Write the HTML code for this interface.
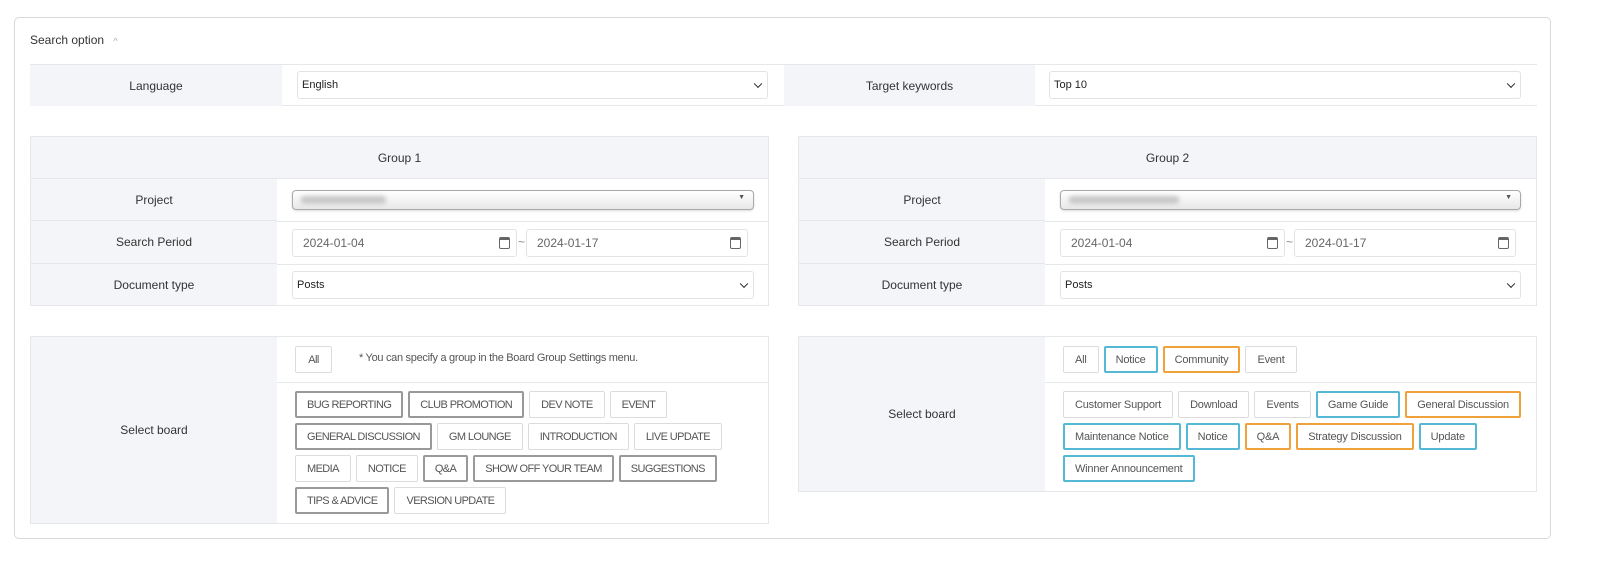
<!DOCTYPE html>
<html><head><meta charset="utf-8"><style>
*{box-sizing:border-box;margin:0;padding:0}
body{width:1600px;height:565px;background:#fff;font-family:"Liberation Sans","Noto Sans CJK KR",sans-serif;color:#333;font-size:12px;position:relative;overflow:hidden}
.outer{position:absolute;left:14px;top:17px;width:1537px;height:522px;border:1px solid #d8d8d8;border-radius:5px}
.abs{position:absolute}
.lbl{background:#f4f5f8;display:flex;align-items:center;justify-content:center;font-size:12px;color:#333}
.tbl{position:absolute;border:1px solid #e6e7eb;background:#fff}
.sel{position:absolute;border:1px solid #e3e3e3;border-radius:3px;background:#fff;display:flex;align-items:center;padding-left:4px;font-size:11px;color:#222}
.sel .ch{position:absolute;right:6px;top:50%;width:6px;height:6px;border-right:1.5px solid #222;border-bottom:1.5px solid #222;transform:translateY(-70%) rotate(45deg)}
.proj{position:absolute;border:1px solid #aaa;border-radius:4px;background:linear-gradient(#fff,#e8e8e8);box-shadow:0 1px 2px rgba(0,0,0,.15)}
.proj .blur{position:absolute;left:8px;top:5px;width:85px;height:8px;background:#c8c8c8;border-radius:3px;filter:blur(2px)}
.proj .ar{position:absolute;right:8px;top:3px;font-size:7px;color:#555}
.date{position:absolute;border:1px solid #e3e3e3;border-radius:3px;background:#fff;display:flex;align-items:center;padding-left:10px;font-size:12px;color:#666}
.cal{position:absolute;right:6px;top:7px;width:11px;height:12px;border:1.5px solid #666;border-radius:2px;border-top-width:3px}
.tags{position:absolute;display:flex;flex-wrap:wrap;gap:5px 5px}
.t{height:27px;border:1px solid #dcdcdc;border-radius:2px;padding:0 11px;display:flex;align-items:center;font-size:11px;color:#555;background:#fff;letter-spacing:-.6px}
.r .t{letter-spacing:-.2px}
.d{border:2px solid #999;padding:0 10px}
.b{border:2px solid #55b9d6;padding:0 10px}
.o{border:2px solid #efa13a;padding:0 10px}
</style></head><body>
<div class="outer"></div>
<div class="abs" style="left:30px;top:33px;font-size:12px;color:#333">Search option <span style="color:#aaa;font-size:9px;margin-left:6px">^</span></div>

<div class="tbl" style="left:30px;top:64px;width:1507px;height:42px;border-left:none;border-right:none">
 <div class="lbl abs" style="left:0;top:0;width:252px;height:41px">Language</div>
 <div class="sel" style="left:267px;top:6px;width:471px;height:28px">English<span class="ch"></span></div>
 <div class="lbl abs" style="left:754px;top:0;width:251px;height:41px">Target keywords</div>
 <div class="sel" style="left:1019px;top:6px;width:472px;height:28px">Top 10<span class="ch"></span></div>
</div>

<div class="tbl" style="left:30px;top:136px;width:739px;height:170px">
 <div class="lbl abs" style="left:0;top:0;width:737px;height:42px;border-bottom:1px solid #e6e7eb">Group 1</div>
 <div class="lbl abs" style="left:0;top:42px;width:246px;height:42px;border-bottom:1px solid #e6e7eb">Project</div>
 <div class="lbl abs" style="left:0;top:84px;width:246px;height:43px;border-bottom:1px solid #e6e7eb">Search Period</div>
 <div class="lbl abs" style="left:0;top:127px;width:246px;height:41px">Document type</div>
 <div class="abs" style="left:246px;top:84px;width:491px;height:1px;background:#e6e7eb"></div>
 <div class="abs" style="left:246px;top:127px;width:491px;height:1px;background:#e6e7eb"></div>
 <div class="proj" style="left:261px;top:53px;width:462px;height:20px"><div class="blur"></div><span class="ar">▼</span></div>
 <div class="date" style="left:261px;top:92px;width:225px;height:28px">2024-01-04<span class="cal"></span></div>
 <div class="abs" style="left:487px;top:98px;color:#888">~</div>
 <div class="date" style="left:495px;top:92px;width:222px;height:28px">2024-01-17<span class="cal"></span></div>
 <div class="sel" style="left:261px;top:134px;width:462px;height:28px">Posts<span class="ch"></span></div>
</div>
<div class="tbl" style="left:798px;top:136px;width:739px;height:170px">
 <div class="lbl abs" style="left:0;top:0;width:737px;height:42px;border-bottom:1px solid #e6e7eb">Group 2</div>
 <div class="lbl abs" style="left:0;top:42px;width:246px;height:42px;border-bottom:1px solid #e6e7eb">Project</div>
 <div class="lbl abs" style="left:0;top:84px;width:246px;height:43px;border-bottom:1px solid #e6e7eb">Search Period</div>
 <div class="lbl abs" style="left:0;top:127px;width:246px;height:41px">Document type</div>
 <div class="abs" style="left:246px;top:84px;width:491px;height:1px;background:#e6e7eb"></div>
 <div class="abs" style="left:246px;top:127px;width:491px;height:1px;background:#e6e7eb"></div>
 <div class="proj" style="left:261px;top:53px;width:461px;height:20px"><div class="blur" style="width:110px"></div><span class="ar">▼</span></div>
 <div class="date" style="left:261px;top:92px;width:225px;height:28px">2024-01-04<span class="cal"></span></div>
 <div class="abs" style="left:487px;top:98px;color:#888">~</div>
 <div class="date" style="left:495px;top:92px;width:222px;height:28px">2024-01-17<span class="cal"></span></div>
 <div class="sel" style="left:261px;top:134px;width:461px;height:28px">Posts<span class="ch"></span></div>
</div>

<div class="tbl" style="left:30px;top:336px;width:739px;height:188px">
 <div class="lbl abs" style="left:0;top:0;width:246px;height:186px">Select board</div>
 <div class="abs" style="left:246px;top:45px;width:491px;height:1px;background:#e6e7eb"></div>
 <div class="t abs" style="left:264px;top:9px;width:37px;justify-content:center;padding:0">All</div>
 <div class="abs" style="left:328px;top:15px;font-size:11px;color:#555;letter-spacing:-.3px">* You can specify a group in the Board Group Settings menu.</div>
 <div class="tags" style="left:264px;top:54px;width:465px">
  <span class="t d">BUG REPORTING</span><span class="t d">CLUB PROMOTION</span><span class="t">DEV NOTE</span><span class="t">EVENT</span>
  <span class="t d">GENERAL DISCUSSION</span><span class="t">GM LOUNGE</span><span class="t">INTRODUCTION</span><span class="t">LIVE UPDATE</span>
  <span class="t">MEDIA</span><span class="t">NOTICE</span><span class="t d">Q&amp;A</span><span class="t d">SHOW OFF YOUR TEAM</span><span class="t d">SUGGESTIONS</span>
  <span class="t d">TIPS &amp; ADVICE</span><span class="t">VERSION UPDATE</span>
 </div>
</div>

<div class="tbl r" style="left:798px;top:336px;width:739px;height:156px">
 <div class="lbl abs" style="left:0;top:0;width:246px;height:154px">Select board</div>
 <div class="abs" style="left:246px;top:45px;width:491px;height:1px;background:#e6e7eb"></div>
 <div class="tags" style="left:264px;top:9px;width:470px">
  <span class="t">All</span><span class="t b">Notice</span><span class="t o">Community</span><span class="t">Event</span>
 </div>
 <div class="tags" style="left:264px;top:54px;width:470px">
  <span class="t">Customer Support</span><span class="t">Download</span><span class="t">Events</span><span class="t b">Game Guide</span><span class="t o">General Discussion</span>
  <span class="t b">Maintenance Notice</span><span class="t b">Notice</span><span class="t o">Q&amp;A</span><span class="t o">Strategy Discussion</span><span class="t b">Update</span>
  <span class="t b">Winner Announcement</span>
 </div>
</div>
</body></html>
